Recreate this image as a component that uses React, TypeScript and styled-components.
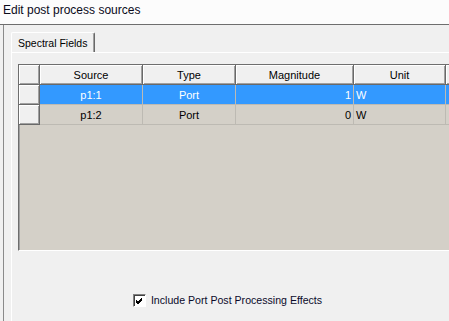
import styled, { createGlobalStyle } from "styled-components";

interface SourceRow {
    source: string;
    type: string;
    magnitude: number;
    unit: string;
    selected?: boolean;
}

const columns = [
    { key: "source", label: "Source", width: 103 },
    { key: "type", label: "Type", width: 93 },
    { key: "magnitude", label: "Magnitude", width: 118 },
    { key: "unit", label: "Unit", width: 92 },
    { key: "extra", label: "", width: 60 },
];

const rows: SourceRow[] = [
    { source: "p1:1", type: "Port", magnitude: 1, unit: "W", selected: true },
    { source: "p1:2", type: "Port", magnitude: 0, unit: "W" },
];

const GlobalStyle = createGlobalStyle`
    html, body {
        margin: 0;
        padding: 0;
        background: #f0f0f0;
        overflow: hidden;
    }
    * {
        box-sizing: border-box;
    }
`;

const App = () => {
    return (
        <>
            <GlobalStyle />
            <Window>
                <TitleBar>Edit post process sources</TitleBar>
                <Body>
                    <Frame>
                        <TabStrip>
                            <Tab>Spectral Fields</Tab>
                        </TabStrip>
                        <TabPage>
                            <Grid>
                                <HeaderRow>
                                    <RowHeaderCell />
                                    {columns.map((col) => (
                                        <HeaderCell
                                            key={col.key}
                                            style={{ width: col.width }}
                                        >
                                            {col.label}
                                        </HeaderCell>
                                    ))}
                                </HeaderRow>
                                {rows.map((row) => (
                                    <DataRow key={row.source} $selected={row.selected}>
                                        <RowHeaderCell />
                                        <Cell $align="center" style={{ width: 103 }}>
                                            {row.source}
                                        </Cell>
                                        <Cell $align="center" style={{ width: 93 }}>
                                            {row.type}
                                        </Cell>
                                        <Cell $align="right" style={{ width: 118 }}>
                                            {row.magnitude}
                                        </Cell>
                                        <Cell $align="left" style={{ width: 92 }}>
                                            {row.unit}
                                        </Cell>
                                        <Cell $align="left" style={{ width: 60 }} />
                                    </DataRow>
                                ))}
                            </Grid>
                            <CheckRow>
                                <CheckBox>
                                    <svg width="9" height="9" viewBox="0 0 9 9">
                                        <path
                                            d="M1 4 L3 6 L7 2 M1 5 L3 7 L7 3 M1 6 L3 8 L7 4"
                                            stroke="#000"
                                            strokeWidth="1"
                                            fill="none"
                                            shapeRendering="crispEdges"
                                        />
                                    </svg>
                                </CheckBox>
                                <CheckLabel>Include Port Post Processing Effects</CheckLabel>
                            </CheckRow>
                        </TabPage>
                    </Frame>
                </Body>
            </Window>
        </>
    );
};

const Window = styled.div`
    display: flex;
    flex-direction: column;

    width: 449px;
    height: 321px;

    overflow: hidden;

    font-family: "Liberation Sans", Arial, sans-serif;
    font-size: 11px;
    color: #000;
`;

const TitleBar = styled.div`
    height: 25px;

    padding: 2px 0 0 3px;

    font-size: 12px;
    line-height: 16px;
    color: #0a0a1a;

    background: #fcfcfc;
    border-bottom: 1px solid #6e6e6e;
`;

const Body = styled.div`
    flex: 1;

    display: flex;

    min-width: 0;
    padding-left: 3px;

    background: #f0f0f0;
`;

const Frame = styled.div`
    flex: 1;

    display: flex;
    flex-direction: column;

    min-width: 0;
    padding: 7px 0 0 7px;

    border-left: 1px solid #8a8a8a;
`;

const TabStrip = styled.div`
    display: flex;

    height: 20px;
`;

const Tab = styled.div`
    display: flex;
    align-items: center;

    padding: 0 7px 0 6px;

    border-top: 1px solid #fff;
    border-left: 1px solid #fff;
    border-right: 1px solid #696969;
    box-shadow: inset -1px 0 0 #a0a0a0;
    border-radius: 2px 2px 0 0;

    font-size: 10.5px;
    line-height: 14px;
`;

const TabPage = styled.div`
    flex: 1;

    display: flex;
    flex-direction: column;

    min-width: 0;
    padding: 11px 0 0 6px;

    border-top: 1px solid #fff;
    border-left: 1px solid #fff;
`;

const Grid = styled.div`
    height: 187px;
    min-width: 0;

    overflow: hidden;

    background: #d4d0c8;
    border-top: 1px solid #6e6e6e;
    border-left: 1px solid #6e6e6e;
    border-bottom: 1px solid #fff;
    box-shadow: inset 1px 1px 0 #a0a0a0;
`;

const HeaderRow = styled.div`
    display: flex;

    height: 20px;
    width: max-content;
`;

const DataRow = styled.div<{ $selected?: boolean }>`
    display: flex;

    height: 20px;
    width: max-content;

    color: ${(props) => (props.$selected ? "#fff" : "#000")};
    background: ${(props) => (props.$selected ? "#3399ff" : "#d4d0c8")};
`;

const RowHeaderCell = styled.div`
    flex: none;

    width: 21px;
    height: 20px;

    background: #f0f0f0;
    border-right: 1px solid #696969;
    border-bottom: 1px solid #696969;
    box-shadow: inset 1px 1px 0 #fff, inset -1px -1px 0 #a0a0a0;
`;

const HeaderCell = styled.div`
    flex: none;

    display: flex;
    align-items: center;
    justify-content: center;

    height: 20px;

    background: #f0f0f0;
    border-right: 1px solid #696969;
    border-bottom: 1px solid #696969;
    box-shadow: inset 1px 1px 0 #fff, inset -1px -1px 0 #a0a0a0;
`;

const Cell = styled.div<{ $align: "left" | "center" | "right" }>`
    flex: none;

    display: flex;
    align-items: center;
    justify-content: ${(props) =>
        props.$align === "left"
            ? "flex-start"
            : props.$align === "right"
            ? "flex-end"
            : "center"};

    height: 20px;

    padding: 0 2px;

    border-right: 1px solid #bdbab3;
    border-bottom: 1px solid #bdbab3;
`;

const CheckRow = styled.div`
    display: flex;
    align-items: center;
    justify-content: center;
    gap: 5px;

    margin-top: 42px;
    padding-right: 12px;
`;

const CheckBox = styled.div`
    display: flex;
    align-items: center;
    justify-content: center;

    width: 13px;
    height: 13px;

    background: #fff;
    border-top: 1px solid #808080;
    border-left: 1px solid #808080;
    border-right: 1px solid #fff;
    border-bottom: 1px solid #fff;
    box-shadow: inset 1px 1px 0 #404040;
`;

const CheckLabel = styled.span`
    font-size: 10.6px;
    line-height: 14px;
    color: #0a0a2a;
`;

export default App;
